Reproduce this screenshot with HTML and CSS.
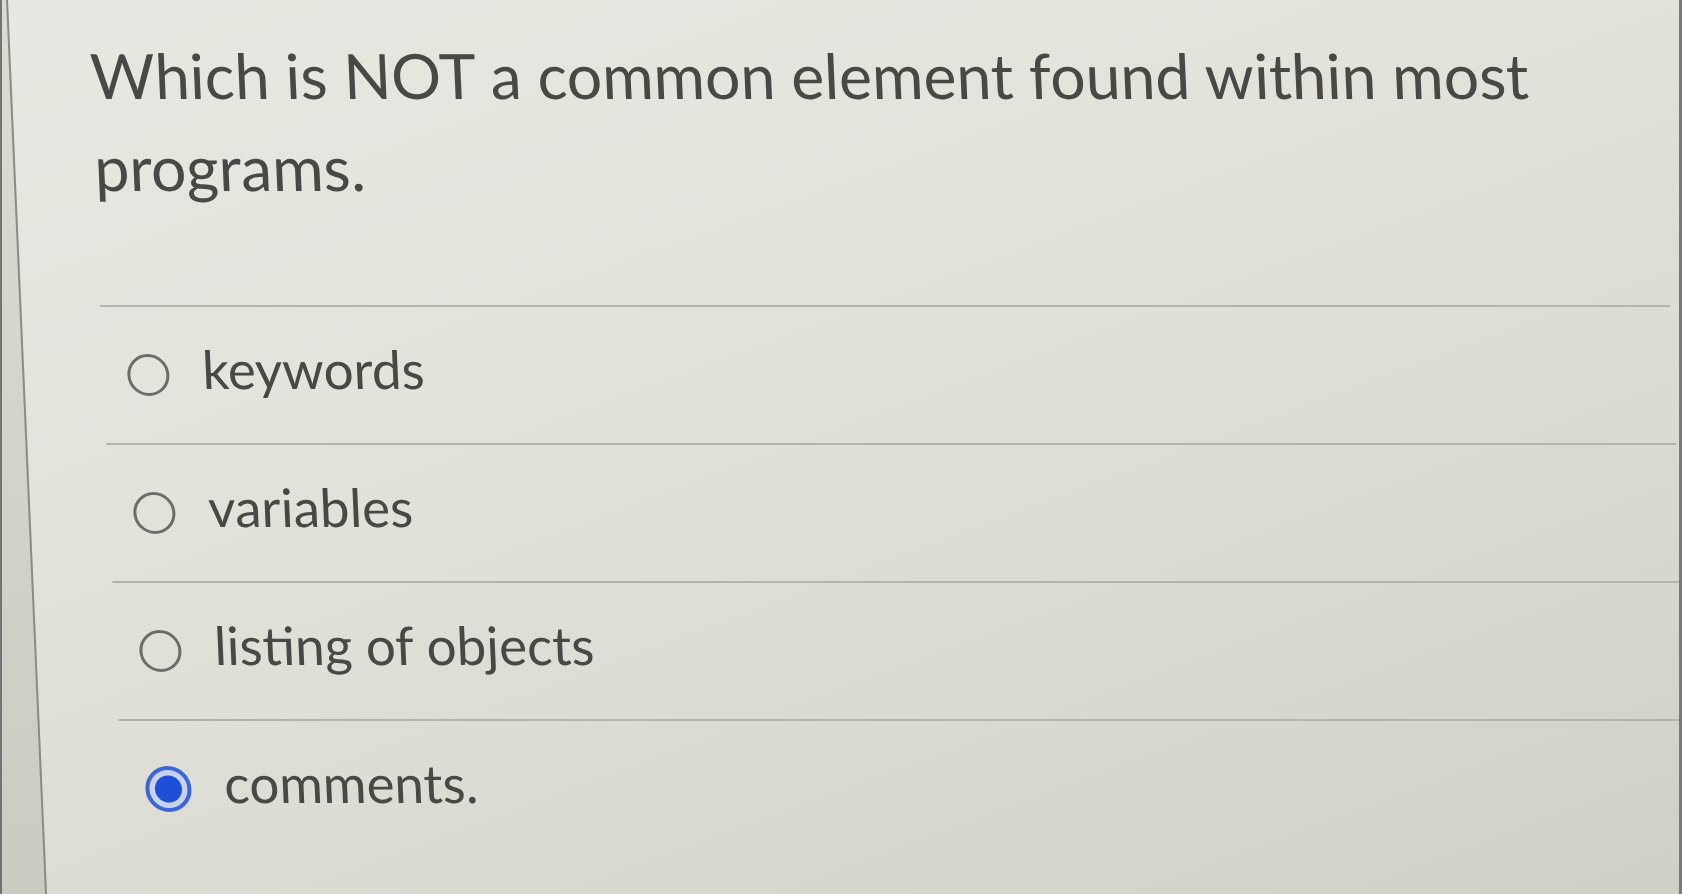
FILE: index.html
```html
<!DOCTYPE html>
<html lang="en">
<head>
<meta charset="utf-8">
<title>Quiz question</title>
<link rel="stylesheet" href="styles.css">
</head>
<body>
<div class="screen">
  <div class="panel">
    <div class="question">Which is NOT a common element found within most programs.</div>
    <div class="answers">
      <div class="answer">
        <span class="radio"></span>
        <span class="label">keywords</span>
      </div>
      <div class="answer">
        <span class="radio"></span>
        <span class="label">variables</span>
      </div>
      <div class="answer">
        <span class="radio"></span>
        <span class="label">listing of objects</span>
      </div>
      <div class="answer">
        <span class="radio checked"></span>
        <span class="label">comments.</span>
      </div>
    </div>
  </div>
</div>
</body>
</html>
```
FILE: styles.css
```css
html, body {
  margin: 0;
  padding: 0;
}
body {
  width: 1682px;
  height: 894px;
  overflow: hidden;
  background: #d3d3cb;
  font-family: Lato, "Open Sans", sans-serif;
  color: #484846;
}
.screen {
  width: 1682px;
  height: 894px;
  overflow: hidden;
  border-left: 2px solid #747470;
  border-right: 3px solid #7a7a74;
  box-sizing: border-box;
  background: linear-gradient(180deg, #dcdcd5, #cbcbc2);
}
.panel {
  margin-left: 4px;
  width: 1700px;
  height: 894px;
  box-sizing: border-box;
  border-left: 2px solid #8c8c86;
  padding-left: 79px;
  transform: skewX(2.5deg);
  transform-origin: 0 0;
  background: linear-gradient(160deg, #e8e8e2 0%, #e3e3dc 35%, #dadad1 70%, #cfcfc5 100%);
}
.question {
  padding-top: 29px;
  width: 1520px;
  font-size: 62.5px;
  line-height: 92px;
  margin-bottom: 92px;
}
.answers {
  width: 1570px;
}
.answer {
  display: flex;
  align-items: center;
  height: 136px;
  border-top: 2px solid #b4b4ac;
  padding-left: 24px;
}
.radio {
  width: 42px;
  height: 42px;
  box-sizing: border-box;
  border: 3px solid #6c6c68;
  border-radius: 50%;
  flex: none;
}
.radio.checked {
  width: 46px;
  height: 46px;
  border: 4px solid #3d64d8;
  background: radial-gradient(circle, #1d4fd8 0 13px, #c6d2f0 14px 100%);
}
.label {
  margin-left: 33px;
  font-size: 53px;
  line-height: 62px;
  padding-bottom: 13px;
}
```
